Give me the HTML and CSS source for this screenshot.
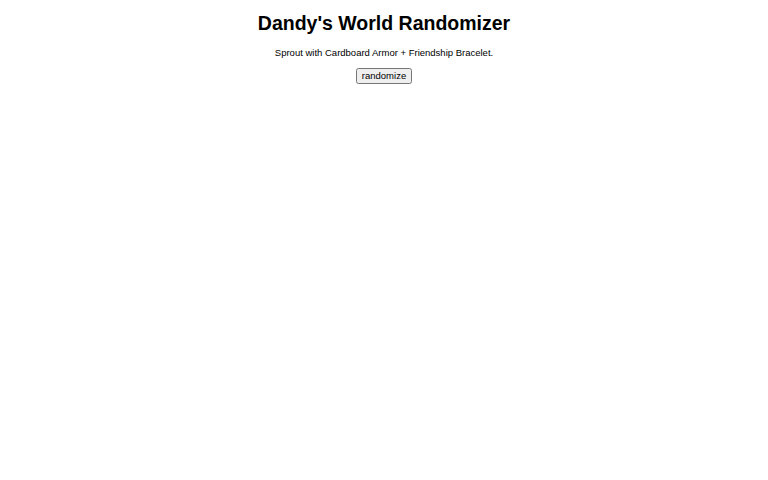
FILE: index.html
```html
<!DOCTYPE html>
<html>
<head>
<meta charset="utf-8">
<link rel="stylesheet" href="styles.css">
</head>
<body>
<main class="page">
  <h1 class="title">Dandy's World Randomizer</h1>
  <p class="result">Sprout with Cardboard Armor + Friendship Bracelet.</p>
  <button class="roll" type="button">randomize</button>
</main>
</body>
</html>
```
FILE: styles.css
```css
body {
  margin: 0;
  font-family: "Liberation Sans", Arial, sans-serif;
  background: #fff;
  color: #000;
}

.page {
  display: flex;
  flex-direction: column;
  align-items: center;
  padding-top: 12px;
}

.title {
  margin: 0;
  font-size: 19.5px;
  font-weight: bold;
  line-height: 22px;
}

.result {
  margin: 13px 0 0;
  font-size: 9.5px;
  line-height: 12px;
}

.roll {
  margin-top: 9px;
  font-family: "Liberation Sans", Arial, sans-serif;
  font-size: 9.5px;
  line-height: 10px;
  padding: 1px 4px;
}
```
